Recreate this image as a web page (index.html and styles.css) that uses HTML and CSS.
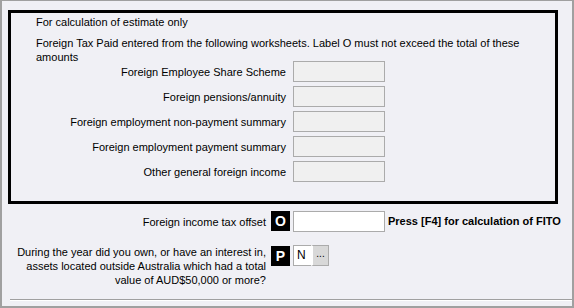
FILE: index.html
```html
<!DOCTYPE html>
<html lang="en">
<head>
    <meta charset="UTF-8">
    <title>Foreign income</title>
    <link rel="stylesheet" href="styles.css">
</head>
<body>
    <div class="frame">
        <div class="box">
            <p class="note">For calculation of estimate only</p>
            <p class="info">Foreign Tax Paid entered from the following worksheets. Label O must not exceed the total of these<br>amounts</p>
            <div class="rows">
                <label>Foreign Employee Share Scheme</label>
                <input class="field" type="text" disabled>
                <label>Foreign pensions/annuity</label>
                <input class="field" type="text" disabled>
                <label>Foreign employment non-payment summary</label>
                <input class="field" type="text" disabled>
                <label>Foreign employment payment summary</label>
                <input class="field" type="text" disabled>
                <label>Other general foreign income</label>
                <input class="field" type="text" disabled>
            </div>
        </div>

        <div class="line offset">
            <label>Foreign income tax offset</label>
            <span class="badge">O</span>
            <input class="field live" type="text">
            <span class="hint">Press [F4] for calculation of FITO</span>
        </div>

        <div class="line assets">
            <label>During the year did you own, or have an interest in,<br>assets located outside Australia which had a total<br>value of AUD$50,000 or more?</label>
            <span class="badge">P</span>
            <div class="picker">
                <span class="value">N</span>
                <button class="dots">...</button>
            </div>
        </div>

        <div class="sep"></div>
    </div>
</body>
</html>
```

FILE: styles.css
```css
body {
    margin: 0;
    padding: 0;
    font-family: "Liberation Sans", Arial, sans-serif;
    font-size: 11px;
    color: #000;
}
.frame {
    box-sizing: border-box;
    width: 574px;
    height: 308px;
    background-color: #f0f0f5;
    border: 2px solid #a0a0a0;
    border-top-width: 1px;
    display: flex;
    flex-direction: column;
}
.box {
    box-sizing: border-box;
    width: 550px;
    height: 194px;
    margin: 9px 0 0 6px;
    border: 3px solid #000;
    padding: 2px 0 0 25px;
}
.box p {
    margin: 0;
    line-height: 14px;
}
.note {
    margin-bottom: 7px !important;
}
.info {
    margin-bottom: -3px !important;
}
.rows {
    display: grid;
    grid-template-columns: 250px 92px;
    column-gap: 7px;
    row-gap: 4px;
    align-items: center;
}
.rows label {
    text-align: right;
}
.field {
    box-sizing: border-box;
    width: 92px;
    height: 21px;
    margin: 0;
    border: 1px solid #ababab;
    background-color: #f0f0f0;
    font: inherit;
}
.field.live {
    background-color: #fff;
}
.line {
    display: flex;
    align-items: flex-start;
}
.line label {
    width: 264px;
    text-align: right;
    line-height: 14px;
}
.badge {
    width: 19px;
    height: 20px;
    margin-left: 5px;
    margin-right: 3px;
    background-color: #000;
    color: #fff;
    font-weight: bold;
    font-size: 14px;
    line-height: 20px;
    text-align: center;
}
.offset {
    margin-top: 7px;
}
.offset label {
    margin-top: 4px;
}
.offset .badge {
    margin-top: 0;
}
.hint {
    margin-left: 3px;
    margin-top: 4px;
    font-weight: bold;
}
.assets {
    margin-top: 13px;
}
.assets .badge {
    margin-top: 1px;
}
.picker {
    display: flex;
    height: 21px;
}
.value {
    box-sizing: border-box;
    width: 18px;
    height: 21px;
    border: 1px solid #ababab;
    border-right: none;
    background-color: #fff;
    padding-left: 3px;
    line-height: 19px;
    font-size: 12px;
}
.dots {
    box-sizing: border-box;
    width: 18px;
    height: 21px;
    margin: 0;
    padding: 0 0 4px 0;
    border: 1px solid #ababab;
    border-left: 2px solid #fff;
    background-color: #d8d8d8;
    font: inherit;
    font-size: 10px;
    line-height: 10px;
}
.sep {
    margin: auto 0 5px 8px;
    height: 1px;
    background-color: #a0a0a0;
    border-bottom: 1px solid #fff;
}
```
